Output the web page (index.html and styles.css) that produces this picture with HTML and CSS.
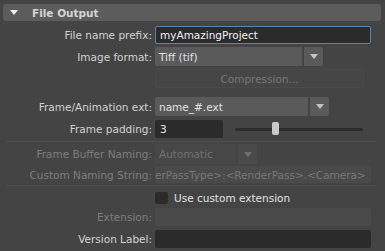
FILE: index.html
```html
<!DOCTYPE html>
<html lang="en">
<head>
    <meta charset="UTF-8">
    <meta name="viewport" content="width=device-width, initial-scale=1.0">
    <title>File Output</title>
    <link rel="stylesheet" href="styles.css">
</head>
<body>
    <div id="panel">
        <div class="section-header">
            <span class="caret"></span>
            <span class="section-title">File Output</span>
        </div>

        <div class="form">
            <div class="row row-prefix">
                <label class="label">File name prefix:</label>
                <div class="field field-focus">myAmazingProject</div>
            </div>
            <div class="row row-format">
                <label class="label">Image format:</label>
                <div class="combo">
                    <div class="combo-value combo-format">Tiff (tif)</div>
                    <div class="combo-arrow"><span class="arrow"></span></div>
                </div>
            </div>
            <div class="row row-compress">
                <span></span>
                <div class="button-disabled">Compression...</div>
            </div>
            <div class="row row-ext">
                <label class="label">Frame/Animation ext:</label>
                <div class="combo">
                    <div class="combo-value combo-ext">name_#.ext</div>
                    <div class="combo-arrow"><span class="arrow"></span></div>
                </div>
            </div>
            <div class="row row-padding">
                <label class="label">Frame padding:</label>
                <div class="padding-group">
                    <div class="field field-short">3</div>
                    <div class="slider">
                        <div class="slider-track"></div>
                        <div class="slider-handle"></div>
                    </div>
                </div>
            </div>

            <div class="separator sep-1"></div>

            <div class="row row-buffer">
                <label class="label disabled">Frame Buffer Naming:</label>
                <div class="combo combo-disabled">
                    <div class="combo-value combo-buffer">Automatic</div>
                    <div class="combo-arrow"><span class="arrow"></span></div>
                </div>
            </div>
            <div class="row row-naming">
                <label class="label disabled">Custom Naming String:</label>
                <div class="field field-disabled field-naming">erPassType&gt;:&lt;RenderPass&gt;.&lt;Camera&gt;</div>
            </div>

            <div class="separator sep-2"></div>

            <div class="row row-check">
                <span></span>
                <div class="check-group">
                    <span class="checkbox"></span>
                    <span class="check-label">Use custom extension</span>
                </div>
            </div>
            <div class="row row-extension">
                <label class="label disabled">Extension:</label>
                <div class="field field-disabled"></div>
            </div>
            <div class="row row-version">
                <label class="label">Version Label:</label>
                <div class="field"></div>
            </div>
        </div>
    </div>
</body>
</html>
```

FILE: styles.css
```css
body {
    margin: 0;
    width: 385px;
    height: 251px;
    overflow: hidden;
    background-color: #444444;
    font-family: "DejaVu Sans", sans-serif;
    font-size: 10.5px;
    color: #d2d2d2;
}

#panel {
    padding: 4px 4px 0 3px;
}

.section-header {
    display: flex;
    align-items: center;
    height: 17px;
    background-color: #5c5c5c;
    border-radius: 3px;
}

.caret {
    width: 0;
    height: 0;
    margin-left: 7px;
    border-left: 4.5px solid transparent;
    border-right: 4.5px solid transparent;
    border-top: 5px solid #f0f0f0;
}

.section-title {
    margin-left: 14px;
    font-weight: bold;
    color: #d4d4d4;
}

.form {
    display: flex;
    flex-direction: column;
}

.row {
    display: grid;
    grid-template-columns: 149px 216px;
    column-gap: 3px;
    align-items: center;
    height: 18px;
}

.label {
    text-align: right;
    white-space: nowrap;
    color: #d2d2d2;
}

.label.disabled {
    color: #7e7e7e;
}

.row-prefix { margin-top: 5px; }
.row-format { margin-top: 3px; height: 19px; }
.row-compress { margin-top: 3px; height: 19px; }
.row-ext { margin-top: 9px; height: 19px; }
.row-padding { margin-top: 4px; }
.row-buffer { margin-top: 0; height: 20px; }
.row-naming { margin-top: 2px; height: 17px; }
.row-check { margin-top: 2px; height: 15px; }
.row-extension { margin-top: 3px; }
.row-version { margin-top: 4px; }

.field {
    box-sizing: border-box;
    height: 100%;
    display: flex;
    align-items: center;
    padding: 0 5px;
    background-color: #2b2b2b;
    border-radius: 2px;
    color: #e6e6e6;
    white-space: nowrap;
    overflow: hidden;
}

.field-focus {
    border: 1px solid #5985b2;
    padding-left: 4px;
    color: #f2f2f2;
}

.field-disabled {
    background-color: #4a4a4a;
    color: #777777;
}

.field-naming {
    padding-left: 0;
}

.combo {
    display: flex;
    height: 100%;
    gap: 2px;
}

.combo-value {
    display: flex;
    align-items: center;
    padding: 0 4px;
    background-color: #5a5a5a;
    border-radius: 2px 0 0 2px;
    color: #e2e2e2;
}

.combo-format { width: 139px; }
.combo-ext { width: 145px; }
.combo-buffer { width: 73px; }

.combo-arrow {
    display: flex;
    align-items: center;
    justify-content: center;
    width: 19px;
    background-color: #5a5a5a;
    border-radius: 0 2px 2px 0;
}

.arrow {
    width: 0;
    height: 0;
    border-left: 4.5px solid transparent;
    border-right: 4.5px solid transparent;
    border-top: 5px solid #c4c4c4;
}

.combo-disabled .combo-value,
.combo-disabled .combo-arrow {
    background-color: #4a4a4a;
    color: #717171;
}

.combo-disabled .combo-value {
    background-color: #474747;
}

.combo-disabled .arrow {
    border-top-color: #707070;
}

.button-disabled {
    box-sizing: border-box;
    width: 209px;
    height: 100%;
    display: flex;
    align-items: center;
    justify-content: center;
    background-color: #464646;
    border: 1px solid #4a4a4a;
    border-radius: 2px;
    color: #777777;
}

.padding-group {
    display: flex;
    align-items: center;
    height: 100%;
}

.field-short {
    width: 68px;
    flex-shrink: 0;
}

.slider {
    position: relative;
    margin-left: 12px;
    width: 128px;
    height: 100%;
    display: flex;
    align-items: center;
}

.slider-track {
    width: 100%;
    height: 3px;
    background-color: #2c2c2c;
    border-radius: 2px;
}

.slider-handle {
    position: absolute;
    left: 37px;
    top: 2px;
    width: 7px;
    height: 13px;
    background-color: #c9c9c9;
    border-radius: 2px;
}

.separator {
    height: 1px;
    margin-left: 3px;
    width: 371px;
    background-color: #4d4d4d;
}

.sep-1 { margin-top: 3px; margin-bottom: 2px; }
.sep-2 { margin-top: 2px; margin-bottom: 2px; }

.check-group {
    display: flex;
    align-items: center;
    gap: 6px;
}

.checkbox {
    width: 13px;
    height: 12px;
    background-color: #2b2b2b;
    border-radius: 2px;
}

.check-label {
    color: #e2e2e2;
}
```
